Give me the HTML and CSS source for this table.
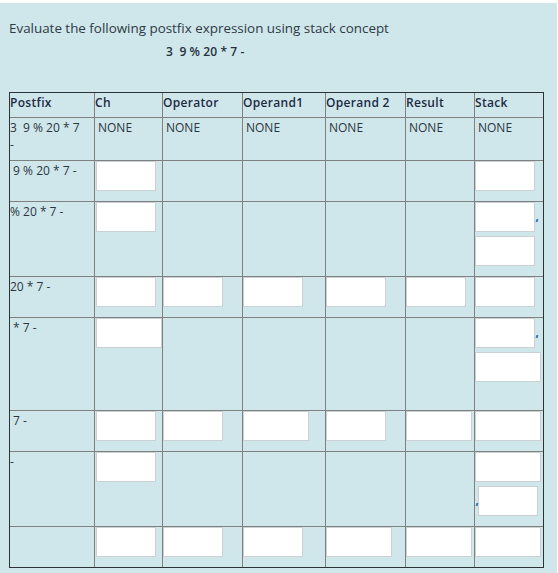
FILE: index.html
```html
<!DOCTYPE html>
<html lang="en">
<head>
<meta charset="utf-8">
<title>Postfix evaluation</title>
<link rel="stylesheet" href="styles.css">
</head>
<body>
<div class="page">
  <p class="title">Evaluate the following postfix expression using stack concept</p>
  <p class="expr">3&nbsp; 9 % 20 * 7 -</p>
  <div class="table-wrap">
    <div class="grid">
      <div class="cell head">Postfix</div>
      <div class="cell head">Ch</div>
      <div class="cell head">Operator</div>
      <div class="cell head">Operand1</div>
      <div class="cell head">Operand 2</div>
      <div class="cell head">Result</div>
      <div class="cell head last">Stack</div>

      <div class="cell txt">3&nbsp; 9 % 20 * 7<br>-</div>
      <div class="cell txt none">NONE</div>
      <div class="cell txt none">NONE</div>
      <div class="cell txt none">NONE</div>
      <div class="cell txt none">NONE</div>
      <div class="cell txt none">NONE</div>
      <div class="cell txt none last">NONE</div>

      <div class="cell txt">&nbsp;9 % 20 * 7 -</div>
      <div class="cell ch"><input class="box" type="text"></div>
      <div class="cell"></div>
      <div class="cell"></div>
      <div class="cell"></div>
      <div class="cell"></div>
      <div class="cell last stack"><input class="box" type="text"></div>

      <div class="cell txt">% 20 * 7 -</div>
      <div class="cell ch"><input class="box" type="text"></div>
      <div class="cell"></div>
      <div class="cell"></div>
      <div class="cell"></div>
      <div class="cell"></div>
      <div class="cell last stack"><input class="box" type="text"><span class="grip"></span><input class="box" type="text"></div>

      <div class="cell txt">20 * 7 -</div>
      <div class="cell ch"><input class="box" type="text"></div>
      <div class="cell"><input class="box" type="text"></div>
      <div class="cell"><input class="box" type="text"></div>
      <div class="cell"><input class="box" type="text"></div>
      <div class="cell"><input class="box" type="text"></div>
      <div class="cell last stack"><input class="box" type="text"></div>

      <div class="cell txt">&nbsp;* 7 -</div>
      <div class="cell ch"><input class="box wide" type="text"></div>
      <div class="cell"></div>
      <div class="cell"></div>
      <div class="cell"></div>
      <div class="cell"></div>
      <div class="cell last stack"><input class="box" type="text"><span class="grip"></span><input class="box wide" type="text"></div>

      <div class="cell txt">&nbsp;7 -</div>
      <div class="cell ch"><input class="box" type="text"></div>
      <div class="cell"><input class="box" type="text"></div>
      <div class="cell"><input class="box wide" type="text"></div>
      <div class="cell"><input class="box" type="text"></div>
      <div class="cell"><input class="box wide" type="text"></div>
      <div class="cell last stack"><input class="box wide" type="text"></div>

      <div class="cell txt">-</div>
      <div class="cell ch"><input class="box" type="text"></div>
      <div class="cell"></div>
      <div class="cell"></div>
      <div class="cell"></div>
      <div class="cell"></div>
      <div class="cell last stack"><input class="box wide" type="text"><span class="grip"></span><input class="box" type="text"></div>

      <div class="cell bottom"></div>
      <div class="cell bottom ch"><input class="box" type="text"></div>
      <div class="cell bottom"><input class="box" type="text"></div>
      <div class="cell bottom"><input class="box" type="text"></div>
      <div class="cell bottom"><input class="box wide" type="text"></div>
      <div class="cell bottom"><input class="box wide" type="text"></div>
      <div class="cell bottom last stack"><input class="box wide" type="text"></div>
    </div>
  </div>
</div>
</body>
</html>
```

FILE: styles.css
```css
html, body {
  margin: 0;
  padding: 0;
  background: #ffffff;
}

.page {
  margin-top: 3px;
  width: 557px;
  min-height: 570px;
  box-sizing: border-box;
  padding-top: 16px;
  background: #cfe6ea;
  font-family: "Open Sans", "Liberation Sans", sans-serif;
  color: #2c3844;
}

.title {
  margin: 0 0 0 9px;
  font-size: 13.4px;
  line-height: 18px;
  color: #2e3a46;
}

.expr {
  margin: 6px 0 0 166px;
  font-size: 12px;
  line-height: 17px;
  font-weight: 600;
  letter-spacing: 0.1px;
  color: #24303c;
}

.table-wrap {
  margin: 32px 0 0 9px;
  width: 533px;
  border: 1px solid #2d3236;
}

.grid {
  display: grid;
  grid-template-columns: 85px 68px 80px 83px 80px 69px 68px;
  grid-template-rows: 25px 43px 41px 75px 41px 93px 41px 75px 40px;
}

.cell {
  box-sizing: border-box;
  border-right: 1px solid #7f8080;
  border-bottom: 1px solid #7f8080;
  font-size: 12px;
  line-height: 17px;
  min-width: 0;
}

.cell.last {
  border-right: none;
}

.cell.bottom {
  border-bottom: none;
}

.head {
  font-weight: 600;
  letter-spacing: 0.3px;
  color: #1d2b45;
  padding-top: 1px;
}

.txt {
  color: #2c3642;
  padding-top: 1px;
}

.none {
  padding-left: 3px;
}

.ch {
  padding-left: 1px;
}

.stack {
  display: flex;
  flex-wrap: wrap;
  align-items: center;
  align-content: flex-start;
  row-gap: 4px;
}

.box {
  display: block;
  box-sizing: border-box;
  width: 60px;
  height: 30px;
  margin: 0;
  padding: 0;
  border: 1px solid #cbd0d4;
  background: #ffffff;
  font: inherit;
}

.box.wide {
  width: 66px;
}

.grip {
  display: block;
  width: 2px;
  height: 3px;
  margin: 6px 0 0 1px;
  background: #3b7cb8;
  transform: skewX(-15deg);
}
```
